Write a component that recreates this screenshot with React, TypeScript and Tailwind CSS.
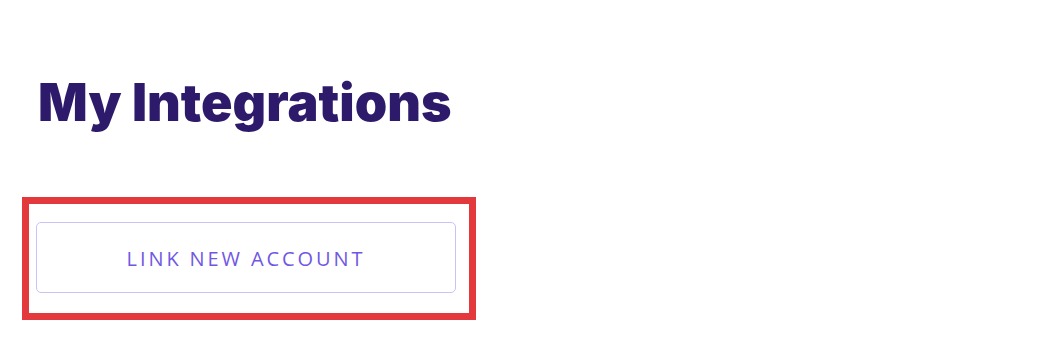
export default function App() {
  return (
    <div className="w-[1046px] h-[343px] bg-white pt-[73px] pl-[38px]">
      <h1 className="text-[52px] leading-[60px] font-black text-[#2d1a6a] tracking-[0px]" style={{ fontFamily: "Inter, 'Noto Sans', sans-serif" }}>
        My Integrations
      </h1>
      <div className="mt-[64px] -ml-[16px] w-[454px] border-[7px] border-[#e4393c] pl-[7px] pr-[13px] pt-[18px] pb-[20px]">
        <button className="w-full h-[71px] rounded-[5px] border border-[#cbc1f6] text-[#7157e4] text-[20px] tracking-[2.9px] pt-[2px]" style={{ fontFamily: "'Open Sans', 'Noto Sans', sans-serif" }}>
          LINK NEW ACCOUNT
        </button>
      </div>
    </div>
  );
}
